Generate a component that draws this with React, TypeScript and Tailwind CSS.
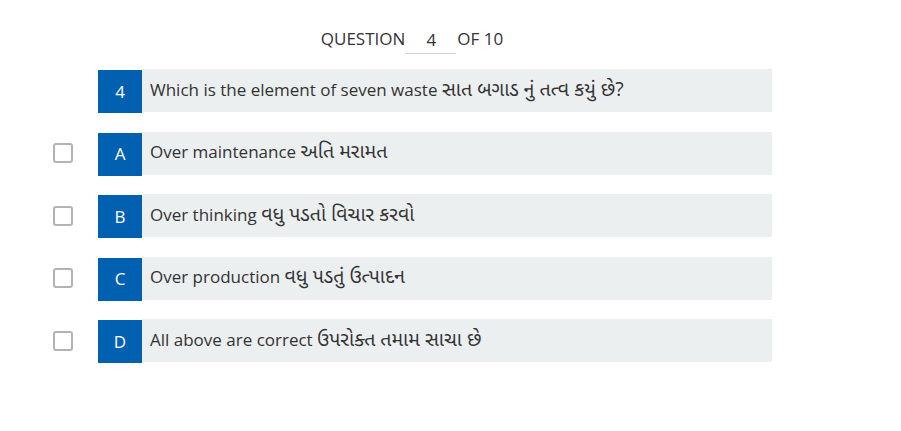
import React from "react";

const options = [
  { key: "A", en: "Over maintenance", gu: "અતિ મરામત" },
  { key: "B", en: "Over thinking", gu: "વધુ પડતો વિચાર કરવો" },
  { key: "C", en: "Over production", gu: "વધુ પડતું ઉત્પાદન" },
  { key: "D", en: "All above are correct", gu: "ઉપરોક્ત તમામ સાચા છે" },
];

function Row({ label, en, gu, checkbox }: { label: string; en: string; gu: string; checkbox: boolean }) {
  return (
    <div className="flex items-center h-[43px]">
      <div className="w-[98px] shrink-0 flex items-center pl-[53px]">
        {checkbox && (
          <div className="w-[20px] h-[20px] rounded-[3px] border-2 border-[#b3b3b3] bg-white" />
        )}
      </div>
      <div className="relative top-px w-[44px] h-[43px] shrink-0 bg-[#0160b0] text-white flex items-center justify-center text-[17px]">
        {label}
      </div>
      <div className="w-[630px] h-[43px] bg-[#eceff0] flex items-center pl-[8px] pb-[2px] text-[17px] text-[#333] whitespace-nowrap">
        <span>
          {en} <span className="text-[19.5px] leading-none">{gu}</span>
        </span>
      </div>
    </div>
  );
}

export default function App() {
  return (
    <div
      className="w-[901px] h-[431px] bg-white"
      style={{ fontFamily: "'Open Sans', 'Noto Sans', 'Noto Sans Gujarati', sans-serif" }}
    >
      <div className="flex justify-center items-center pt-[26px] h-[52px] text-[17px] text-[#333] pr-[77px]">
        <span>QUESTION</span>
        <span className="mx-[1px] w-[50px] text-center border-b border-[#cfcfcf] pb-[1px] mt-[3px]">4</span>
        <span>OF 10</span>
      </div>
      <div className="flex flex-col gap-[19.5px] mt-[17px]">
        <Row label="4" en="Which is the element of seven waste" gu="સાત બગાડ નું તત્વ કયું છે?" checkbox={false} />
        {options.map((o) => (
          <Row key={o.key} label={o.key} en={o.en} gu={o.gu} checkbox={true} />
        ))}
      </div>
    </div>
  );
}
